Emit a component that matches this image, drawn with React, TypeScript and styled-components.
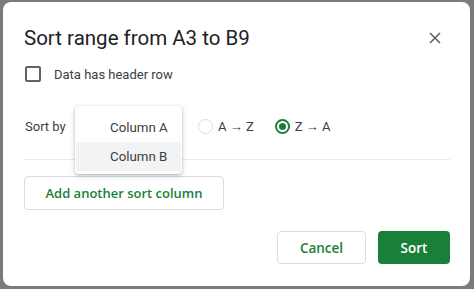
import React from "react";
import styled, { createGlobalStyle } from "styled-components";

const GlobalStyle = createGlobalStyle`
  html, body {
    margin: 0;
    padding: 0;
    background: #7b7b7b;
  }
  body {
    font-family: Roboto, "Liberation Sans", sans-serif;
  }
`;

const columns = ["Column A", "Column B"];
const orders = [
  { label: "A → Z", checked: false },
  { label: "Z → A", checked: true },
];

const App: React.FC = () => {
  return (
    <>
      <GlobalStyle />
      <Backdrop>
        <Dialog>
          <Header>
            <Title>Sort range from A3 to B9</Title>
            <CloseButton aria-label="Close">
              <svg width="14" height="14" viewBox="0 0 14 14">
                <path
                  d="M2 2 L12 12 M12 2 L2 12"
                  stroke="#5f6368"
                  strokeWidth="1.6"
                  fill="none"
                />
              </svg>
            </CloseButton>
          </Header>

          <CheckRow>
            <CheckBox />
            <CheckLabel>Data has header row</CheckLabel>
          </CheckRow>

          <SortRow>
            <SortLabel>Sort by</SortLabel>
            <SelectSlot>
              <Menu>
                {columns.map((c, i) => (
                  <MenuItem key={c} $active={i === 1}>
                    {c}
                  </MenuItem>
                ))}
              </Menu>
            </SelectSlot>
            {orders.map((o) => (
              <RadioOption key={o.label}>
                <Radio $checked={o.checked} />
                <RadioLabel>{o.label}</RadioLabel>
              </RadioOption>
            ))}
          </SortRow>

          <Divider />

          <AddButton>Add another sort column</AddButton>

          <Footer>
            <CancelButton>Cancel</CancelButton>
            <SortButton>Sort</SortButton>
          </Footer>
        </Dialog>
      </Backdrop>
    </>
  );
};

export default App;

const Backdrop = styled.div`
  width: 474px;
  height: 289px;
  padding: 2px 4px 3px 3px;
  box-sizing: border-box;
`;

const Dialog = styled.div`
  width: 467px;
  height: 284px;
  background: #fff;
  border-radius: 8px;
  box-sizing: border-box;
  padding: 0 20px 0 21px;
  display: flex;
  flex-direction: column;
`;

const Header = styled.div`
  display: flex;
  align-items: center;
  justify-content: space-between;
  height: 36px;
  margin-top: 18px;
`;

const Title = styled.h1`
  margin: 0;
  font-family: Roboto, "Open Sans", sans-serif;
  font-weight: 400;
  font-size: 20.5px;
  color: #202124;
`;

const CloseButton = styled.div`
  width: 24px;
  height: 24px;
  display: flex;
  align-items: center;
  justify-content: center;
  margin-right: 3px;
`;

const CheckRow = styled.div`
  display: flex;
  align-items: center;
  gap: 13px;
  margin-top: 9px;
  height: 18px;
  padding-left: 1px;
`;

const CheckBox = styled.div`
  width: 16px;
  height: 16px;
  border: 2px solid #5f6368;
  border-radius: 2px;
  box-sizing: border-box;
`;

const CheckLabel = styled.span`
  font-size: 13px;
  color: #3c4043;
`;

const SortRow = styled.div`
  display: flex;
  align-items: center;
  height: 20px;
  margin-top: 33px;
  padding-left: 1px;
`;

const SortLabel = styled.span`
  font-size: 13px;
  color: #3c4043;
  width: 50px;
`;

const SelectSlot = styled.div`
  position: relative;
  width: 123px;
  height: 20px;
`;

const Menu = styled.div`
  position: absolute;
  left: 0;
  top: -10px;
  width: 107px;
  padding: 7px 0 3px;
  background: #fff;
  border-radius: 4px;
  box-shadow: 0 1px 3px rgba(60, 64, 67, 0.3), 0 2px 6px rgba(60, 64, 67, 0.15);
  z-index: 2;
`;

const MenuItem = styled.div<{ $active?: boolean }>`
  height: 29px;
  display: flex;
  align-items: center;
  padding-left: 34px;
  margin: 0 1px;
  font-size: 13.3px;
  color: #3c4043;
  background: ${(p) => (p.$active ? "#f1f3f4" : "transparent")};
`;

const RadioOption = styled.div`
  display: flex;
  align-items: center;
  gap: 5px;
  margin-right: 21px;
`;

const Radio = styled.div<{ $checked?: boolean }>`
  width: 15px;
  height: 15px;
  border-radius: 50%;
  box-sizing: border-box;
  border: ${(p) => (p.$checked ? "2px solid #188038" : "1px solid #dadce0")};
  display: flex;
  align-items: center;
  justify-content: center;

  &::after {
    content: "";
    display: ${(p) => (p.$checked ? "block" : "none")};
    width: 7px;
    height: 7px;
    border-radius: 50%;
    background: #188038;
  }
`;

const RadioLabel = styled.span`
  font-size: 13px;
  color: #3c4043;
`;

const Divider = styled.div`
  height: 1px;
  background: #e8eaed;
  margin-top: 23px;
`;

const AddButton = styled.div`
  margin-top: 16px;
  width: 200px;
  height: 34px;
  box-sizing: border-box;
  border: 1px solid #dadce0;
  border-radius: 4px;
  display: flex;
  align-items: center;
  justify-content: center;
  font-family: "Open Sans", Roboto, sans-serif;
  font-weight: 600;
  font-size: 13px;
  color: #188038;
`;

const Footer = styled.div`
  display: flex;
  justify-content: flex-end;
  gap: 12px;
  margin-top: 21px;
`;

const BaseButton = styled.div`
  height: 33px;
  box-sizing: border-box;
  border-radius: 4px;
  display: flex;
  align-items: center;
  justify-content: center;
  font-family: "Open Sans", Roboto, sans-serif;
  font-weight: 600;
  font-size: 13.5px;
`;

const CancelButton = styled(BaseButton)`
  width: 89px;
  border: 1px solid #dadce0;
  color: #188038;
`;

const SortButton = styled(BaseButton)`
  width: 72px;
  background: #188038;
  color: #fff;
`;
